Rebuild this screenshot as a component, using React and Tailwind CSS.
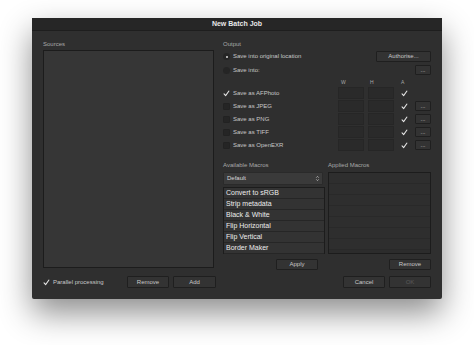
import React from "react";

const font = { fontFamily: '"Liberation Sans", Arial, sans-serif' };

const Check = ({ className = "" }) => (
  <svg viewBox="0 0 8 8" className={"w-[7px] h-[7px] " + className}>
    <path d="M1.2 4.4 L3 6.4 L6.8 1.2" fill="none" stroke="#e6e6e6" strokeWidth="1.2" strokeLinecap="round" strokeLinejoin="round" />
  </svg>
);

const Box = ({ checked }) =>
  checked ? (
    <div className="w-[7px] h-[7px] flex items-center justify-center">
      <Check />
    </div>
  ) : (
    <div className="w-[7px] h-[7px] rounded-[1px] bg-[#252525] border border-[#222]" />
  );

const Btn = ({ children, className = "", disabled }) => (
  <div
    className={
      "flex items-center justify-center bg-[#333] border border-[#1f1f1f] rounded-[1px] text-[6px] " +
      (disabled ? "text-[#5a5a5a] " : "text-[#c8c8c8] ") +
      className
    }
  >
    {children}
  </div>
);

const formats = [
  { name: "Save as AFPhoto", checked: true, more: false },
  { name: "Save as JPEG", checked: false, more: true },
  { name: "Save as PNG", checked: false, more: true },
  { name: "Save as TIFF", checked: false, more: true },
  { name: "Save as OpenEXR", checked: false, more: true },
];

const macros = [
  "Convert to sRGB",
  "Strip metadata",
  "Black & White",
  "Flip Horizontal",
  "Flip Vertical",
  "Border Maker",
];

export default function App() {
  return (
    <div className="w-[474px] h-[345px] bg-white pt-[18px] pl-[32px]" style={font}>
      <div className="w-[410px] h-[281px] bg-[#2f2f2f] rounded-[2px] shadow-[0_14px_32px_rgba(0,0,0,0.45)] flex flex-col">
        {/* title bar */}
        <div className="h-[13px] bg-[#262626] border-b border-[#1e1e1e] flex items-center justify-center text-[7px] font-bold text-[#e8e8e8]">
          New Batch Job
        </div>

        <div className="flex px-[11px] h-[240px] gap-[9px]">
          {/* left column */}
          <div className="w-[171px] flex flex-col pt-[9px]">
            <div className="h-[8px] leading-[8px] text-[6px] text-[#a8a8a8]">Sources</div>
            <div className="mt-[2px] h-[218px] bg-[#363636] border border-[#1c1c1c]" />
          </div>

          {/* right column */}
          <div className="flex-1 flex flex-col pt-[9px] text-[6px] text-[#c8c8c8]">
            <div className="h-[8px] leading-[8px] text-[#a8a8a8]">Output</div>
            <div className="mt-[3px] h-[11px] flex items-center">
              <div className="w-[7px] h-[7px] rounded-full bg-[#252525] flex items-center justify-center">
                <div className="w-[2px] h-[2px] rounded-full bg-[#ddd]" />
              </div>
              <span className="ml-[3px] flex-1">Save into original location</span>
              <Btn className="w-[55px] h-[11px]">Authorise...</Btn>
            </div>
            <div className="mt-[3px] h-[10px] flex items-center">
              <div className="w-[7px] h-[7px] rounded-full bg-[#252525]" />
              <span className="ml-[3px] flex-1">Save into:</span>
              <Btn className="w-[16px] h-[10px]">...</Btn>
            </div>

            <div className="mt-[4px] h-[8px] flex items-center text-[5px] text-[#a8a8a8]">
              <div className="flex-1" />
              <div className="w-[26px] pl-[3px]">W</div>
              <div className="w-[26px] ml-[4px] pl-[2px]">H</div>
              <div className="w-[21px] pl-[7px]">A</div>
              <div className="w-[16px]" />
            </div>

            <div className="flex flex-col gap-[1px]">
              {formats.map((f) => (
                <div key={f.name} className="h-[12px] flex items-center">
                  <Box checked={f.checked} />
                  <span className="ml-[3px] flex-1">{f.name}</span>
                  <div className="w-[26px] h-[12px] bg-[#2a2a2a] border border-[#262626]" />
                  <div className="w-[26px] h-[12px] ml-[4px] bg-[#2a2a2a] border border-[#262626]" />
                  <div className="w-[21px] flex justify-center">
                    <Check />
                  </div>
                  <div className="w-[16px]">
                    {f.more && <Btn className="w-[16px] h-[10px]">...</Btn>}
                  </div>
                </div>
              ))}
            </div>

            <div className="mt-[10px] flex gap-[5px] h-[8px] leading-[8px] text-[#a8a8a8]">
              <div className="w-[100px]">Available Macros</div>
              <div>Applied Macros</div>
            </div>

            <div className="mt-[3px] flex gap-[3px]">
              <div className="w-[102px] flex flex-col">
                <div className="w-[100px] h-[13px] bg-[#3a3a3a] border border-[#2a2a2a] rounded-[1px] flex items-center pl-[3px] pr-[2px] text-[#d8d8d8]">
                  <span className="flex-1">Default</span>
                  <svg viewBox="0 0 6 8" className="w-[5px] h-[7px]">
                    <path d="M1.5 3 L3 1.5 L4.5 3 M1.5 5 L3 6.5 L4.5 5" fill="none" stroke="#c8c8c8" strokeWidth="0.9" />
                  </svg>
                </div>
                <div className="mt-[2px] h-[67px] bg-[#2a2a2a] border border-[#1c1c1c] flex flex-col">
                  {macros.map((m) => (
                    <div
                      key={m}
                      className="h-[11px] flex items-center px-[2px] border-b border-[#262626] bg-[#333] text-[7px] font-medium text-[#ededed]"
                    >
                      {m}
                    </div>
                  ))}
                </div>
              </div>
              <div className="w-[103px] h-[82px] bg-[#2c2c2c] border border-[#1c1c1c] flex flex-col">
                {[0, 1, 2, 3, 4, 5, 6].map((i) => (
                  <div key={i} className="h-[11px] border-b border-[#292929] bg-[#2e2e2e]" />
                ))}
              </div>
            </div>

            <div className="mt-[5px] flex">
              <div className="w-[102px] flex justify-end pr-[7px]">
                <Btn className="w-[42px] h-[11px]">Apply</Btn>
              </div>
              <div className="flex-1 flex justify-end">
                <Btn className="w-[42px] h-[11px]">Remove</Btn>
              </div>
            </div>
          </div>
        </div>

        {/* footer */}
        <div className="mt-[5px] h-[12px] flex items-center px-[11px] text-[6px] text-[#c8c8c8]">
          <div className="w-[84px] flex items-center">
            <Box checked />
            <span className="ml-[3px]">Parallel processing</span>
          </div>
          <Btn className="w-[42px] h-[12px]">Remove</Btn>
          <Btn className="w-[43px] h-[12px] ml-[4px]">Add</Btn>
          <div className="flex-1" />
          <Btn className="w-[42px] h-[12px]">Cancel</Btn>
          <Btn className="w-[42px] h-[12px] ml-[4px]" disabled>
            OK
          </Btn>
        </div>
      </div>
    </div>
  );
}
